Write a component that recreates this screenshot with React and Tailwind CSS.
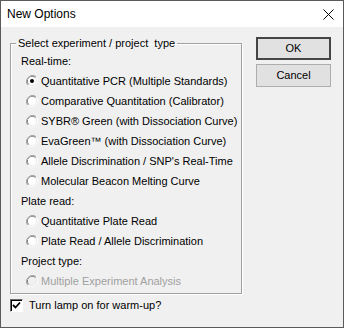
import React, { useState } from 'react';

const Radio = ({ checked, disabled }) => (
  <svg width="12" height="12" viewBox="0 0 12 12" className="shrink-0">
    <path d="M10.2 1.8 A6 6 0 0 0 1.8 10.2" fill="none" stroke="#a0a0a0" strokeWidth="1" />
    <path d="M9.5 2.5 A5 5 0 0 0 2.5 9.5" fill="none" stroke="#696969" strokeWidth="1" />
    <path d="M1.8 10.2 A6 6 0 0 0 10.2 1.8" fill="none" stroke="#ffffff" strokeWidth="1" />
    <path d="M2.5 9.5 A5 5 0 0 0 9.5 2.5" fill="none" stroke="#e3e3e3" strokeWidth="1" />
    <circle cx="6" cy="6" r="4.2" fill={disabled ? '#f0f0f0' : '#ffffff'} />
    {checked && <circle cx="6" cy="6" r="2" fill="#000" />}
  </svg>
);

const Option = ({ label, checked, disabled, onClick }) => (
  <div
    className={`flex items-center h-[20px] pl-[15px] gap-[3px] whitespace-nowrap ${disabled ? 'text-[#a0a0a0]' : 'text-black'}`}
    onClick={disabled ? undefined : onClick}
  >
    <Radio checked={checked} disabled={disabled} />
    <span>{label}</span>
  </div>
);

const Label = ({ children }) => (
  <div className="flex items-center h-[20px] pl-[10px]">{children}</div>
);

export default function App() {
  const [selected, setSelected] = useState(0);
  const [lamp, setLamp] = useState(true);

  const realTime = [
    'Quantitative PCR (Multiple Standards)',
    'Comparative Quantitation (Calibrator)',
    'SYBR® Green (with Dissociation Curve)',
    'EvaGreen™ (with Dissociation Curve)',
    "Allele Discrimination / SNP's Real-Time",
    'Molecular Beacon Melting Curve',
  ];
  const plateRead = ['Quantitative Plate Read', 'Plate Read / Allele Discrimination'];

  return (
    <div
      className="w-[344px] h-[328px] border border-[#5a5a5a] bg-[#f0f0f0] flex flex-col text-[11px] leading-[13px]"
      style={{ fontFamily: '"Liberation Sans", Arial, sans-serif' }}
    >
      <div className="h-[26px] bg-white flex items-center justify-between pl-[6px] pr-[9px]">
        <span className="text-[12px]">New Options</span>
        <svg width="11" height="11" viewBox="0 0 11 11">
          <path d="M0.5 0.5 L10.5 10.5 M10.5 0.5 L0.5 10.5" stroke="#000" strokeWidth="1" />
        </svg>
      </div>

      <div className="flex pl-[9px] pt-[10px]">
        <fieldset className="w-[232px] h-[257px] border border-[#a0a0a0] shadow-[inset_1px_1px_0_#fff,1px_1px_0_#fff] pt-[1px]">
          <legend className="ml-[5px] px-[2px]">Select experiment / project&nbsp; type</legend>
          <Label>Real-time:</Label>
          {realTime.map((t, i) => (
            <Option key={t} label={t} checked={selected === i} onClick={() => setSelected(i)} />
          ))}
          <Label>Plate read:</Label>
          {plateRead.map((t, i) => (
            <Option key={t} label={t} checked={selected === 6 + i} onClick={() => setSelected(6 + i)} />
          ))}
          <Label>Project type:</Label>
          <Option label="Multiple Experiment Analysis" disabled />
        </fieldset>

        <div className="flex flex-col gap-[4px] ml-[14px]">
          <button className="w-[75px] h-[23px] bg-[#e1e1e1] border-2 border-[#454545] flex items-center justify-center">
            OK
          </button>
          <button className="w-[75px] h-[23px] bg-[#e1e1e1] border border-[#adadad] flex items-center justify-center">
            Cancel
          </button>
        </div>
      </div>

      <div className="flex items-center gap-[6px] pl-[9px] mt-[5px]" onClick={() => setLamp(!lamp)}>
        <div className="w-[13px] h-[13px] bg-white border border-t-[#696969] border-l-[#696969] border-b-white border-r-white shadow-[inset_1px_1px_0_#000] flex items-center justify-center">
          {lamp && (
            <svg width="9" height="9" viewBox="0 0 9 9">
              <path d="M1 4 L3.5 6.5 L8 1.5" fill="none" stroke="#000" strokeWidth="1.8" />
            </svg>
          )}
        </div>
        <span>Turn lamp on for warm-up?</span>
      </div>
    </div>
  );
}
